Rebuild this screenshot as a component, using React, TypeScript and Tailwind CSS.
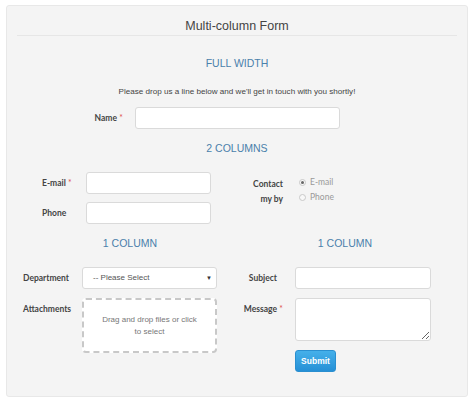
import React from 'react';

const labelFont = { fontFamily: "Lato, 'Open Sans', sans-serif" };

function Req() {
    return <span className="inline-block w-0 whitespace-nowrap text-[#e05050] font-normal">&nbsp;*</span>;
}

function Heading({ children, className = '' }: { children: React.ReactNode; className?: string }) {
    return (
        <div className={`text-center text-[10.5px] leading-[14px] text-[#4a80ab] ${className}`}>{children}</div>
    );
}

function Radio({ label, checked }: { label: string; checked?: boolean }) {
    return (
        <div className="flex items-center gap-[4px] h-[15px]">
            <span className="w-[7px] h-[7px] rounded-full border border-[#c9c9c9] bg-[#f8f8f8] flex items-center justify-center">
                {checked && <span className="w-[3px] h-[3px] rounded-full bg-[#666]" />}
            </span>
            <span className="text-[8.5px] text-[#999]" style={labelFont}>{label}</span>
        </div>
    );
}

export default function App() {
    const input = 'h-[22px] bg-white border border-[#dadada] rounded-[3px]';
    const label = 'text-[8.5px] font-bold text-[#444] leading-[12px] pt-[5px]';

    return (
        <div className="min-h-[404px] bg-white pt-[5px] pl-[6px]" style={{ fontFamily: "'Liberation Sans', Arial, sans-serif" }}>
            <div className="w-[462px] h-[392px] bg-[#f4f4f4] border border-[#e8e8e8] rounded-[3px] px-[10px]">
                {/* Title */}
                <div className="pt-[12px] border-b border-[#e6e6e6] text-center text-[12.5px] leading-[17px] text-[#444]">
                    Multi-column Form
                </div>

                <Heading className="mt-[20px]">FULL WIDTH</Heading>
                <div className="mt-[16px] text-center text-[8.1px] leading-[12px] text-[#444]">
                    Please drop us a line below and we'll get in touch with you shortly!
                </div>

                {/* Name */}
                <div className="mt-[9px] flex">
                    <div className={`${label} w-[118px] text-right pr-[18px]`} style={labelFont}>
                        Name<Req />
                    </div>
                    <div className={`${input} w-[205px]`} />
                </div>

                <Heading className="mt-[12px]">2 COLUMNS</Heading>

                <div className="mt-[17px] grid grid-cols-2">
                    <div className="flex flex-col gap-[8px] pl-[25px]">
                        <div className="flex">
                            <div className={`${label} w-[44px]`} style={labelFont}>
                                E-mail<Req />
                            </div>
                            <div className={`${input} w-[125px]`} />
                        </div>
                        <div className="flex">
                            <div className={`${label} w-[44px]`} style={labelFont}>Phone</div>
                            <div className={`${input} w-[125px]`} />
                        </div>
                    </div>
                    <div className="flex">
                        <div className={`${label} w-[58px] text-right pr-[12px] leading-[15px] pt-[3px]`} style={labelFont}>
                            Contact<br />my by
                        </div>
                        <div className="ml-[4px] pt-[3px] flex flex-col">
                            <Radio label="E-mail" checked />
                            <Radio label="Phone" />
                        </div>
                    </div>
                </div>

                <div className="mt-[12px] grid grid-cols-2">
                    <Heading className="pl-[6px]">1 COLUMN</Heading>
                    <Heading className="pr-[4px]">1 COLUMN</Heading>
                </div>

                <div className="mt-[17px] grid grid-cols-2">
                    <div className="flex flex-col gap-[9px] pl-[6px]">
                        <div className="flex">
                            <div className={`${label} w-[59px]`} style={labelFont}>Department</div>
                            <div className={`${input} w-[135px] flex items-center justify-between px-[10px] text-[8px] text-[#555]`}>
                                <span>-- Please Select</span>
                                <span className="text-[6px] text-[#333] -mr-[6px]">▼</span>
                            </div>
                        </div>
                        <div className="flex">
                            <div className={`${label} w-[59px]`} style={labelFont}>Attachments</div>
                            <div className="w-[135px] h-[55px] bg-white border-2 border-dashed border-[#c8c8c8] rounded-[4px] flex items-center justify-center text-center px-[14px] text-[8px] leading-[12px] text-[#777]">
                                Drag and drop files or click to select
                            </div>
                        </div>
                    </div>
                    <div className="flex flex-col gap-[9px]">
                        <div className="flex">
                            <div className={`${label} w-[58px] text-right pr-[18px]`} style={labelFont}>Subject</div>
                            <div className={`${input} w-[136px]`} />
                        </div>
                        <div className="flex">
                            <div className={`${label} w-[58px] text-right pr-[18px]`} style={labelFont}>
                                Message<Req />
                            </div>
                            <div className="flex flex-col">
                                <textarea className="w-[136px] h-[43px] bg-white border border-[#dadada] rounded-[3px] resize-y outline-none" />
                                <button className="mt-[9px] w-[41px] h-[22px] rounded-[3px] bg-gradient-to-b from-[#45b0ea] to-[#2590d6] border border-[#2a8fd0] text-white text-[8.5px] font-bold">
                                    Submit
                                </button>
                            </div>
                        </div>
                    </div>
                </div>
            </div>
        </div>
    );
}
